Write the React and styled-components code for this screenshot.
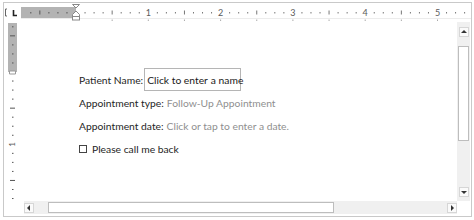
import React from "react";
import styled, { createGlobalStyle } from "styled-components";

const Global = createGlobalStyle`
  html, body { margin: 0; padding: 0; background: #ffffff; }
  body { width: 474px; height: 220px; overflow: hidden; }
`;

const Frame = styled.div`
  margin: 2px 2px 0 3px;
  width: 467px;
  height: 213px;
  border: 1px solid #c9c9c9;
  background: #fff;
  display: flex;
  flex-direction: column;
  box-sizing: content-box;
`;

const RulerRow = styled.div`
  height: 19px;
  flex: none;
`;

const Middle = styled.div`
  flex: 1;
  display: flex;
  min-height: 0;
`;

const VRulerCol = styled.div`
  width: 18px;
  flex: none;
`;

const Page = styled.div`
  flex: 1;
  padding: 46px 0 0 57px;
  font-family: Lato, "Open Sans", sans-serif;
  font-size: 10.3px;
  color: #262626;
  display: flex;
  flex-direction: column;
`;

const Line = styled.div`
  height: 23px;
  display: flex;
  align-items: center;
  white-space: nowrap;
`;

const Label = styled.span`
  color: #262626;
`;

const Placeholder = styled.span`
  color: #8f8f8f;
  margin-left: 3px;
`;

const ContentBox = styled.span`
  display: inline-flex;
  align-items: center;
  height: 23px;
  box-sizing: border-box;
  border: 1px solid #b5b5b5;
  padding: 0 2px 0 2px;
  margin-left: 1px;
  width: 97px;
  color: #1a1a1a;
`;

const Caret = styled.span`
  display: inline-block;
  width: 1px;
  height: 13px;
  background: #111;
  margin: 0 1px 0 2px;
`;

const Check = styled.span`
  display: inline-block;
  width: 8px;
  height: 8px;
  border: 1px solid #444;
  margin-right: 5px;
  box-sizing: border-box;
`;

const VScroll = styled.div`
  width: 13px;
  flex: none;
  margin-right: 1px;
  background: #f0f0f0;
  display: flex;
  flex-direction: column;
  align-items: center;
  padding-top: 5px;
`;

const ArrowBtn = styled.div`
  width: 10px;
  height: 10px;
  box-sizing: border-box;
  border: 1px solid #d6d6d6;
  background: #fafafa;
  display: flex;
  align-items: center;
  justify-content: center;
  flex: none;
`;

const VThumb = styled.div`
  width: 11px;
  height: 95px;
  margin-top: 9px;
  box-sizing: border-box;
  border: 1px solid #bdbdbd;
  background: #fff;
`;

const Spacer = styled.div`
  flex: ${(p) => (p.$h ? "none" : "1")};
  height: ${(p) => (p.$h ? `${p.$h}px` : "auto")};
`;

const HScroll = styled.div`
  height: 13px;
  flex: none;
  margin-bottom: 2px;
  display: flex;
  align-items: center;
  padding-left: 20px;
  background: linear-gradient(to right, #fff 0, #fff 20px, #f0f0f0 20px, #f0f0f0 calc(100% - 14px), #fff calc(100% - 14px));
`;

const HThumb = styled.div`
  width: 286px;
  height: 11px;
  margin-left: 14px;
  box-sizing: border-box;
  border: 1px solid #bdbdbd;
  background: #fff;
`;

const HEnd = styled.div`
  flex: 1;
  display: flex;
  justify-content: flex-end;
  padding-right: 14px;
`;

function Tri({ dir }) {
  const pts = {
    up: "1,5 4,2 7,5",
    down: "1,3 4,6 7,3",
    left: "5,1 2,4 5,7",
    right: "3,1 6,4 3,7",
  }[dir];
  return (
    <svg width="8" height="8" viewBox="0 0 8 8">
      <polygon points={pts} fill="#333" />
    </svg>
  );
}

function HRuler() {
  const start = 72;
  const inch = 72.3;
  const ticks = [];
  for (let i = -6; i <= 52; i++) {
    const x = start + (i * inch) / 8;
    if (x < 18 || x > 466) continue;
    if (i === 0) continue;
    if (i % 8 === 0) {
      const n = Math.abs(i / 8);
      ticks.push(
        <text key={"n" + i} x={x} y={13} fontSize="9" fontFamily="Lato, sans-serif" textAnchor="middle" fill="#5a5a5a">
          {n}
        </text>
      );
    } else if (i % 4 === 0) {
      ticks.push(<rect key={i} x={x - 0.5} y={7.5} width={1} height={4} fill={i < 0 ? "#555" : "#777"} />);
    } else {
      ticks.push(<rect key={i} x={x - 0.5} y={9} width={1} height={1.5} fill={i < 0 ? "#555" : "#777"} />);
    }
  }
  const under = [];
  for (let i = 1; i <= 10; i++) {
    const x = start + (i * inch) / 2;
    if (x > 460) continue;
    under.push(<rect key={"u" + i} x={x - 0.5} y={16.5} width={1} height={1.5} fill="#aaa" />);
  }
  return (
    <svg width="467" height="19" viewBox="0 0 467 19">
      <rect x="17" y="4" width="450" height="11" fill="#fff" />
      <rect x="17" y="4" width="55" height="11" fill="#b3b3b3" />
      <line x1="17" y1="15.5" x2="467" y2="15.5" stroke="#ececec" />
      <path d="M3 6 L1.5 6 L1.5 13 L3 13" stroke="#666" fill="none" strokeWidth="1" />
      <path d="M9.5 7 L9.5 12.5 L13 12.5" stroke="#222" fill="none" strokeWidth="1.6" />
      {ticks}
      {under}
      <path d="M68.5 1.5 L75.5 1.5 L72 5 Z" fill="#fff" stroke="#888" />
      <path d="M72 8 L75.5 11.5 L75.5 13.5 L68.5 13.5 L68.5 11.5 Z" fill="#fff" stroke="#888" />
      <rect x="68.5" y="13.5" width="7" height="3.5" fill="#fff" stroke="#888" />
    </svg>
  );
}

function VRuler() {
  const start = 50;
  const inch = 72.3;
  const ticks = [];
  for (let i = -5; i <= 18; i++) {
    const y = start + (i * inch) / 8;
    if (y < 2 || y > 178) continue;
    if (i === 0) continue;
    if (i % 8 === 0) {
      ticks.push(
        <text key={"n" + i} x={8.5} y={y + 3} fontSize="8" fontFamily="Lato, sans-serif" textAnchor="middle" fill="#555" transform={`rotate(-90 8.5 ${y})`}>
          1
        </text>
      );
    } else if (i % 4 === 0) {
      ticks.push(<rect key={i} x={6} y={y - 0.5} width={5} height={1} fill="#555" />);
    } else {
      ticks.push(<rect key={i} x={8} y={y - 0.5} width={1.5} height={1} fill="#555" />);
    }
  }
  return (
    <svg width="18" height="180" viewBox="0 0 18 180">
      <rect x="4" y="0" width="9" height="180" fill="#fff" />
      <rect x="4" y="1" width="9" height="49" fill="#b3b3b3" />
      {ticks}
      <path d="M5.5 49 L11.5 49 L11.5 52 L5.5 52 Z" fill="#fff" stroke="#999" />
    </svg>
  );
}

export default function App() {
  return (
    <>
      <Global />
      <Frame>
        <RulerRow>
          <HRuler />
        </RulerRow>
        <Middle>
          <VRulerCol>
            <VRuler />
          </VRulerCol>
          <Page>
            <Line>
              <Label>Patient Name:</Label>
              <ContentBox>
                Click to enter<Caret />a name
              </ContentBox>
            </Line>
            <Line>
              <Label>Appointment type:</Label>
              <Placeholder>Follow-Up Appointment</Placeholder>
            </Line>
            <Line>
              <Label>Appointment date:</Label>
              <Placeholder>Click or tap to enter a date.</Placeholder>
            </Line>
            <Line>
              <Check />
              <Label>Please call me back</Label>
            </Line>
          </Page>
          <VScroll>
            <ArrowBtn>
              <Tri dir="up" />
            </ArrowBtn>
            <VThumb />
            <Spacer />
            <ArrowBtn>
              <Tri dir="down" />
            </ArrowBtn>
            <Spacer $h={4} />
          </VScroll>
        </Middle>
        <HScroll>
          <ArrowBtn>
            <Tri dir="left" />
          </ArrowBtn>
          <HThumb />
          <HEnd>
            <ArrowBtn>
              <Tri dir="right" />
            </ArrowBtn>
          </HEnd>
        </HScroll>
      </Frame>
    </>
  );
}
